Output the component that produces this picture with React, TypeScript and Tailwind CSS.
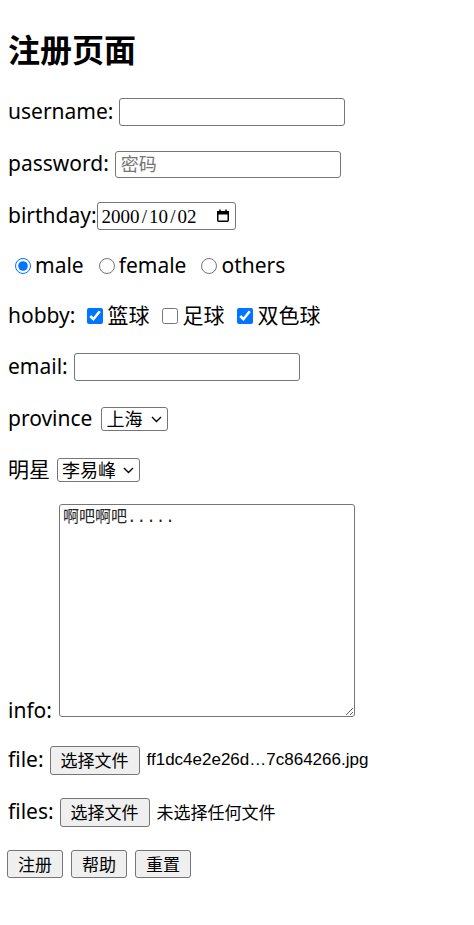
import React from "react";

function ChooseButton() {
  return (
    <button className="w-[90px] h-[29px] bg-[#efefef] border border-[#767676] rounded-[3px] text-[17px] leading-none">
      选择文件
    </button>
  );
}

function FakeSelect({ value, width, gap }: { value: string; width: string; gap: string }) {
  return (
    <div
      className={`${width} ${gap} h-[24px] border border-[#767676] rounded-[3px] flex items-center justify-between pl-[4px] pr-[5px] text-[18px] leading-none`}
    >
      <span>{value}</span>
      <svg width="11" height="7" viewBox="0 0 11 7" fill="none">
        <path d="M1 1l4.5 4.5L10 1" stroke="#000" strokeWidth="1.4" />
      </svg>
    </div>
  );
}

function App() {
  return (
    <div className="w-[474px] h-[925px] bg-white pl-2 pt-[28px] text-black text-[21px] font-['Noto_Sans','Noto_Sans_CJK_SC',sans-serif]">
      <div className="h-[58px] flex items-start">
        <h2 className="h-[40px] flex items-center text-[32px] font-bold font-['Noto_Sans_CJK_SC',sans-serif]">注册页面</h2>
      </div>

      <div className="h-[52px] flex items-center">
        <span>username:</span>
        <input className="ml-[6px] w-[226px] h-[28px] border border-[#767676] rounded-[3px] bg-white" />
      </div>

      <div className="h-[52px] flex items-center">
        <span>password:</span>
        <input
          type="password"
          placeholder="密码"
          className="ml-[6px] w-[226px] h-[27px] border border-[#767676] rounded-[3px] px-[5px] text-[18px] placeholder:text-[#757575]"
        />
      </div>

      <div className="h-[52px] flex items-center">
        <span>birthday:</span>
        <div className="w-[139px] h-[28px] border border-[#767676] rounded-[3px] flex items-center justify-between pl-[4px] pr-[5px]">
          <span className="flex text-[19px] leading-none font-['Liberation_Serif',serif]">
            {"2000/10/02".split("").map((c, i) => (
              <span key={i} className="w-[9.5px] text-center">
                {c}
              </span>
            ))}
          </span>
          <svg width="14" height="14" viewBox="0 0 14 14" fill="none">
            <rect x="1.75" y="2.75" width="10.5" height="9.5" rx="1" stroke="#000" strokeWidth="1.5" />
            <rect x="1" y="2" width="12" height="3.5" fill="#000" />
            <path d="M4 0.5v2M10 0.5v2" stroke="#000" strokeWidth="1.5" />
          </svg>
        </div>
      </div>

      <div className="h-[48px] flex items-center">
        <input type="radio" name="sex" defaultChecked className="ml-[7px] w-4 h-4 accent-[#0075ff]" />
        <span className="ml-[4px]">male</span>
        <input type="radio" name="sex" className="ml-[15px] w-4 h-4 accent-[#0075ff]" />
        <span className="ml-[4px]">female</span>
        <input type="radio" name="sex" className="ml-[15px] w-4 h-4 accent-[#0075ff]" />
        <span className="ml-[4px]">others</span>
      </div>

      <div className="h-[52px] flex items-center">
        <span>hobby:</span>
        <input type="checkbox" defaultChecked className="ml-[12px] w-4 h-4 accent-[#0075ff]" />
        <span className="ml-[4px]">篮球</span>
        <input type="checkbox" className="ml-[13px] w-4 h-4 accent-[#0075ff]" />
        <span className="ml-[4px]">足球</span>
        <input type="checkbox" defaultChecked className="ml-[13px] w-4 h-4 accent-[#0075ff]" />
        <span className="ml-[4px]">双色球</span>
      </div>

      <div className="h-[50px] flex items-center">
        <span>email:</span>
        <input type="email" className="ml-[6px] w-[226px] h-[28px] border border-[#767676] rounded-[3px]" />
      </div>

      <div className="h-[54px] flex items-center">
        <span>province</span>
        <FakeSelect value="上海" width="w-[67px]" gap="ml-[9px]" />
      </div>

      <div className="h-[48px] flex items-center">
        <span>明星</span>
        <FakeSelect value="李易峰" width="w-[83px]" gap="ml-[7px]" />
      </div>

      <div className="mt-[10px] flex items-end">
        <span className="leading-none mb-[-4px]">info:</span>
        <textarea
          defaultValue="啊吧啊吧....."
          className="ml-[7px] w-[296px] h-[213px] border border-[#767676] rounded-[3px] px-[3px] py-[3px] text-[16px] leading-tight text-[#222] resize font-['Liberation_Mono','Noto_Sans_CJK_SC',monospace]"
        />
      </div>

      <div className="mt-[18px] h-[49px] flex items-center">
        <span>file:</span>
        <div className="ml-[6px]">
          <ChooseButton />
        </div>
        <span className="ml-[7px] text-[17px] font-['Liberation_Sans',sans-serif]">ff1dc4e2e26d…7c864266.jpg</span>
      </div>

      <div className="h-[56px] flex items-center">
        <span>files:</span>
        <div className="ml-[6px]">
          <ChooseButton />
        </div>
        <span className="ml-[7px] text-[17px] font-['Noto_Sans_CJK_SC',sans-serif]">未选择任何文件</span>
      </div>

      <div className="h-[48px] flex items-center gap-[8px] ml-[-1px]">
        {["注册", "帮助", "重置"].map((t) => (
          <button
            key={t}
            className="w-[56px] h-[28px] bg-[#efefef] border border-[#767676] rounded-[3px] text-[17px] leading-none"
          >
            {t}
          </button>
        ))}
      </div>
    </div>
  );
}

export default App;
